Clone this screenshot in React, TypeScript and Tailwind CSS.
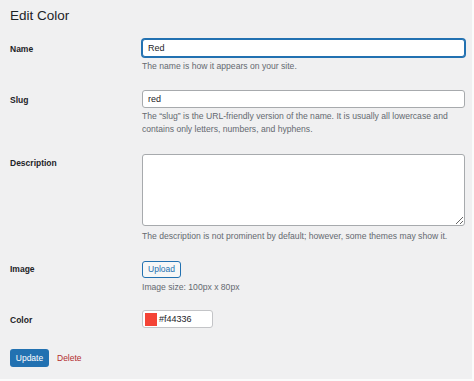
export default function App() {
  const font = { fontFamily: '"Liberation Sans", Arial, sans-serif' }

  return (
    <div className="w-[474px] h-[381px] bg-[#fbfbfb]" style={font}>
      <div className="w-[472px] h-[379px] bg-[#f0f0f1] pl-[10px] pt-[7px] text-[#1d2327]">
        <h1 className="text-[13.5px] leading-[18px] font-normal">Edit Color</h1>

        <div className="mt-[14px] flex">
          <label className="w-[132px] pt-[4px] text-[8.5px] leading-[12px] font-bold">Name</label>
          <div className="w-[323px]">
            <input
              defaultValue="Red"
              className="block w-full h-[18px] rounded-[3px] border border-[#2271b1] bg-white px-[5px] text-[9px] shadow-[0_0_0_1px_#2271b1] outline-none"
            />
            <p className="mt-[3px] text-[8.6px] leading-[13px] text-[#646970]">
              The name is how it appears on your site.
            </p>
          </div>
        </div>

        <div className="mt-[17px] flex">
          <label className="w-[132px] pt-[4px] text-[8.5px] leading-[12px] font-bold">Slug</label>
          <div className="w-[323px]">
            <input
              defaultValue="red"
              className="block w-full h-[18px] rounded-[3px] border border-[#a7aaad] bg-white px-[5px] text-[9px] outline-none"
            />
            <p className="mt-[2px] text-[8.6px] leading-[13px] text-[#646970]">
              The “slug” is the URL-friendly version of the name. It is usually all lowercase and contains only
              letters, numbers, and hyphens.
            </p>
          </div>
        </div>

        <div className="mt-[18px] flex">
          <label className="w-[132px] pt-[3px] text-[8.5px] leading-[12px] font-bold">Description</label>
          <div className="w-[323px]">
            <textarea className="block w-full h-[72px] rounded-[3px] border border-[#a7aaad] bg-white px-[5px] text-[9px] outline-none" />
            <p className="mt-[4px] text-[8.6px] leading-[13px] text-[#646970]">
              The description is not prominent by default; however, some themes may show it.
            </p>
          </div>
        </div>

        <div className="mt-[18px] flex">
          <label className="w-[132px] pt-[2px] text-[8.5px] leading-[12px] font-bold">Image</label>
          <div className="w-[323px]">
            <button className="block h-[17px] w-[39px] rounded-[3px] border border-[#2271b1] bg-[#f6f7f7] text-[8.5px] text-[#2271b1]">
              Upload
            </button>
            <p className="mt-[3px] text-[8.6px] leading-[13px] text-[#646970]">Image size: 100px x 80px</p>
          </div>
        </div>

        <div className="mt-[16px] flex">
          <label className="w-[132px] pt-[4px] text-[8.5px] leading-[12px] font-bold">Color</label>
          <div className="w-[323px]">
            <div className="flex h-[18px] w-[71px] items-center gap-[2px] rounded-[3px] border border-[#c3c4c7] bg-white pl-[2px]">
              <span className="h-[13px] w-[12px] bg-[#f44336]" />
              <span className="text-[9px] leading-[12px]">#f44336</span>
            </div>
          </div>
        </div>

        <div className="mt-[21px] flex items-center gap-[8px]">
          <button className="h-[18px] w-[39px] rounded-[3px] bg-[#2271b1] text-[8.5px] text-white">Update</button>
          <a className="text-[8.5px] text-[#b32d2e]">Delete</a>
        </div>
      </div>
    </div>
  )
}
